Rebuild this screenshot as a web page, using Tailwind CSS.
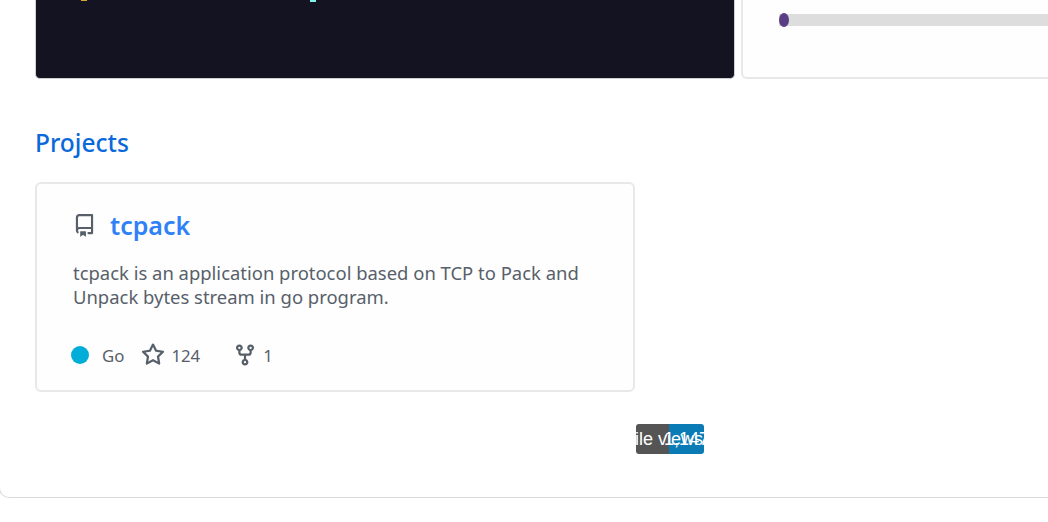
<!DOCTYPE html>
<html lang="en">
  <head>
    <meta charset="UTF-8" />
    <title>Profile</title>
    <meta name="viewport" content="width=device-width, initial-scale=1.0" />
    <script src="https://cdn.jsdelivr.net/npm/@tailwindcss/browser@4"></script>
  </head>
  <body class="bg-white overflow-hidden h-[522px] font-['Noto_Sans','Open_Sans',sans-serif]">
    <!-- Page box, cut off on the left and right -->
    <div class="w-[1100px] h-[498px] -ml-[1px] border border-t-0 border-[#d9dcdf] rounded-bl-[10px] pl-[35px]">
      <!-- Top cards -->
      <div class="flex gap-[6px] h-[79px]">
        <div class="w-[700px] bg-[#141321] border border-t-0 border-[#cfcfd4] rounded-b-[5px] relative">
          <span class="absolute left-[45px] top-0 w-[6px] h-[1px] bg-[#d9a52b]"></span>
          <span class="absolute left-[274px] top-0 w-[6px] h-[2px] bg-[#7df3e8]"></span>
        </div>
        <div class="w-[340px] bg-[#fefefe] border-2 border-t-0 border-[#e8e8e8] rounded-b-[6px] pl-[36px] pt-[14px]">
          <div class="relative h-[12px] bg-[#dddddd]">
            <span class="absolute left-0 -top-[1px] w-[10px] h-[14px] rounded-[50%] bg-[#5b3d84]"></span>
          </div>
        </div>
      </div>

      <!-- Projects -->
      <h2 class="mt-[48px] text-[24.5px] leading-[32px] font-[550] text-[#0969da]">Projects</h2>

      <div class="mt-[23px] w-[600px] h-[210px] bg-[#fefefe] border-2 border-[#e6e8ea] rounded-[6px] pl-[36px] pt-[22px]">
        <div class="flex items-center gap-[14px] h-[38px]">
          <svg class="w-[23px] h-[23px] text-[#57606a]" viewBox="0 0 16 16" fill="currentColor">
            <path d="M2 2.5A2.5 2.5 0 0 1 4.5 0h8.75a.75.75 0 0 1 .75.75v12.5a.75.75 0 0 1-.75.75h-2.5a.75.75 0 0 1 0-1.5h1.75v-2h-8a1 1 0 0 0-.714 1.7.75.75 0 1 1-1.072 1.05A2.495 2.495 0 0 1 2 11.5Zm10.5-1h-8a1 1 0 0 0-1 1v6.708A2.486 2.486 0 0 1 4.5 9h8ZM5 12.25a.25.25 0 0 1 .25-.25h3.5a.25.25 0 0 1 .25.25v3.25a.25.25 0 0 1-.4.2l-1.45-1.087a.249.249 0 0 0-.3 0L5.4 15.7a.25.25 0 0 1-.4-.2Z" />
          </svg>
          <a class="text-[25px] leading-[38px] font-semibold text-[#2f81f7]">tcpack</a>
        </div>
        <p class="mt-[17px] w-[530px] text-[18.45px] leading-[24px] text-[#57606a]">
          tcpack is an application protocol based on TCP to Pack and Unpack bytes stream in go program.
        </p>
        <div class="mt-[34px] -ml-[2px] flex items-center h-[24px] text-[16.8px] text-[#57606a]">
          <span class="w-[18px] h-[18px] rounded-full bg-[#00add8]"></span>
          <span class="ml-[13px] mt-[2px]">Go</span>
          <svg class="ml-[17px] w-[24px] h-[24px]" viewBox="0 0 16 16" fill="currentColor">
            <path d="M8 .25a.75.75 0 0 1 .673.418l1.882 3.815 4.21.612a.75.75 0 0 1 .416 1.279l-3.046 2.97.719 4.192a.751.751 0 0 1-1.088.791L8 12.347l-3.766 1.98a.75.75 0 0 1-1.088-.79l.72-4.194L.818 6.374a.75.75 0 0 1 .416-1.28l4.21-.611L7.327.668A.75.75 0 0 1 8 .25Zm0 2.445L6.615 5.5a.75.75 0 0 1-.564.41l-3.097.45 2.24 2.184a.75.75 0 0 1 .216.664l-.528 3.084 2.769-1.456a.75.75 0 0 1 .698 0l2.77 1.456-.53-3.084a.75.75 0 0 1 .216-.664l2.24-2.183-3.096-.45a.75.75 0 0 1-.564-.41L8 2.694Z" />
          </svg>
          <span class="ml-[6px] mt-[2px]">124</span>
          <svg class="ml-[33px] w-[24px] h-[24px]" viewBox="0 0 16 16" fill="currentColor">
            <path d="M5 5.372v.878c0 .414.336.75.75.75h4.5a.75.75 0 0 0 .75-.75v-.878a2.25 2.25 0 1 1 1.5 0v.878a2.25 2.25 0 0 1-2.25 2.25h-1.5v2.128a2.251 2.251 0 1 1-1.5 0V8.5h-1.5A2.25 2.25 0 0 1 3.5 6.25v-.878a2.25 2.25 0 1 1 1.5 0ZM5 3.25a.75.75 0 1 0-1.5 0 .75.75 0 0 0 1.5 0Zm6.75.75a.75.75 0 1 0 0-1.5.75.75 0 0 0 0 1.5Zm-3 8.75a.75.75 0 1 0-1.5 0 .75.75 0 0 0 1.5 0Z" />
          </svg>
          <span class="ml-[6px] mt-[2px]">1</span>
        </div>
      </div>

      <!-- Views badge, its text overflows the narrow cells -->
      <div class="mt-[32px] ml-[601px] w-[68px] h-[30px] flex rounded-[3px] overflow-hidden text-[18px] leading-[30px] text-white font-['Liberation_Sans',sans-serif]">
        <div class="w-[33px] bg-[#555555] flex justify-center whitespace-nowrap">
          <span class="relative z-10">Profile views</span>
        </div>
        <div class="w-[35px] bg-[#0a7bb5] flex justify-center whitespace-nowrap">
          <span>1,147</span>
        </div>
      </div>
    </div>
  </body>
</html>
